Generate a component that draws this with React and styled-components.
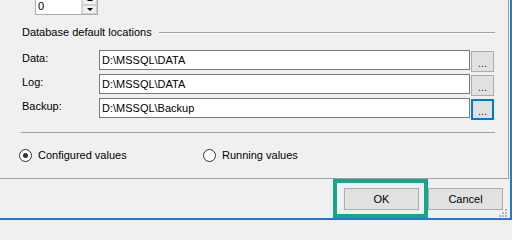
import styled, { createGlobalStyle } from 'styled-components'

const GlobalStyle = createGlobalStyle`
  body {
    margin: 0;
    background: #f0f0f0;
    font-family: "Liberation Sans", Arial, sans-serif;
    font-size: 11px;
    color: #000;
  }
`;

const Window = styled.div`
  position: relative;
  width: 510px;
  height: 218px;
  background: #f0f0f0;
  border-right: 2px solid #1e7bd0;
  border-bottom: 2px solid #1e7bd0;
  overflow: hidden;
`;

const Panel = styled.div`
  box-sizing: border-box;
  width: 509px;
  height: 179px;
  border-right: 1px solid #a0a0a0;
  border-bottom: 1px solid #a0a0a0;
  display: flex;
  flex-direction: column;
`;

const Spin = styled.div`
  box-sizing: border-box;
  margin: -6px 0 0 35px;
  width: 63px;
  height: 21px;
  border: 1px solid #adadad;
  background: #fff;
  display: flex;
`;

const SpinValue = styled.div`
  flex: 1;
  padding: 5px 0 0 2px;
  line-height: 13px;
`;

const SpinButtons = styled.div`
  width: 15px;
  display: flex;
  flex-direction: column;
  border-left: 1px solid #dcdcdc;
`;

const SpinBtn = styled.div`
  flex: 1;
  background: #f0f0f0;
  border: 1px solid #cfcfcf;
  display: flex;
  align-items: center;
  justify-content: center;
  &::after {
    content: '';
    border-left: 3px solid transparent;
    border-right: 3px solid transparent;
    ${(p) => (p.up ? 'border-bottom: 3px solid #000;' : 'border-top: 3px solid #000;')}
  }
`;

const GroupHeader = styled.div`
  display: flex;
  align-items: center;
  margin: 11px 13px 0 22px;
  height: 13px;
  line-height: 13px;
`;

const GroupLine = styled.div`
  flex: 1;
  margin-left: 7px;
  border-top: 1px solid #a0a0a0;
  border-bottom: 1px solid #fff;
`;

const Rows = styled.div`
  display: flex;
  flex-direction: column;
  gap: 2px;
  margin: 11px 0 0 22px;
`;

const Row = styled.div`
  display: flex;
  align-items: flex-start;
`;

const Label = styled.div`
  width: 77px;
  padding-top: 2px;
  line-height: 13px;
`;

const PathInput = styled.div`
  box-sizing: border-box;
  width: 371px;
  height: 20px;
  border: 1px solid #7a7a7a;
  background: #fff;
  padding: 3px 0 0 2px;
  line-height: 13px;
`;

const BrowseButton = styled.div`
  box-sizing: border-box;
  width: 23px;
  height: 21px;
  margin: 1px 0 0 1px;
  background: #e1e1e1;
  border: ${(p) => (p.focused ? '2px solid #0078d7' : '1px solid #adadad')};
  display: flex;
  align-items: center;
  justify-content: center;
  padding-top: 3px;
  color: #4a0a4a;
  line-height: 13px;
`;

const Separator = styled.div`
  margin: 12px 0 0 21px;
  width: 474px;
  border-top: 1px solid #a0a0a0;
`;

const RadioRow = styled.div`
  display: flex;
  margin: 16px 0 0 19px;
`;

const Option = styled.div`
  display: flex;
  align-items: center;
  gap: 6px;
  width: ${(p) => p.width}px;
  line-height: 13px;
`;

const Radio = styled.span`
  box-sizing: border-box;
  width: 13px;
  height: 13px;
  border-radius: 50%;
  border: 1px solid #333;
  background: #fff;
  display: flex;
  align-items: center;
  justify-content: center;
  &::after {
    content: '';
    width: 5px;
    height: 5px;
    border-radius: 50%;
    background: ${(p) => (p.checked ? '#333' : 'transparent')};
  }
`;

const Footer = styled.div`
  height: 39px;
  display: flex;
  justify-content: flex-end;
  align-items: flex-start;
  padding-right: 7px;
`;

const Highlight = styled.div`
  border: 4px solid #17a68a;
  padding: 5px 5px 4px 7px;
`;

const DialogButton = styled.div`
  box-sizing: border-box;
  width: 75px;
  height: 22px;
  margin-top: ${(p) => p.offset || 0}px;
  background: #e1e1e1;
  border: 1px solid #adadad;
  display: flex;
  align-items: center;
  justify-content: center;
  line-height: 13px;
`;

const Grip = styled.svg`
  position: absolute;
  right: 3px;
  bottom: 1px;
`;

const paths = [
  { label: 'Data:', value: 'D:\\MSSQL\\DATA' },
  { label: 'Log:', value: 'D:\\MSSQL\\DATA' },
  { label: 'Backup:', value: 'D:\\MSSQL\\Backup', focused: true },
];

export default function App() {
  return (
    <Window>
      <GlobalStyle />
      <Panel>
        <Spin>
          <SpinValue>0</SpinValue>
          <SpinButtons>
            <SpinBtn up />
            <SpinBtn />
          </SpinButtons>
        </Spin>
        <GroupHeader>
          Database default locations
          <GroupLine />
        </GroupHeader>
        <Rows>
          {paths.map((p) => (
            <Row key={p.label}>
              <Label>{p.label}</Label>
              <PathInput>{p.value}</PathInput>
              <BrowseButton focused={p.focused}>...</BrowseButton>
            </Row>
          ))}
        </Rows>
        <Separator />
        <RadioRow>
          <Option width={184}>
            <Radio checked />
            Configured values
          </Option>
          <Option width={150}>
            <Radio />
            Running values
          </Option>
        </RadioRow>
      </Panel>
      <Footer>
        <Highlight>
          <DialogButton>OK</DialogButton>
        </Highlight>
        <DialogButton offset={9}>Cancel</DialogButton>
      </Footer>
      <Grip width="8" height="8" viewBox="0 0 8 8">
        <rect x="6" y="0" width="2" height="2" fill="#b8b8b8" />
        <rect x="3" y="3" width="2" height="2" fill="#b8b8b8" />
        <rect x="6" y="3" width="2" height="2" fill="#b8b8b8" />
        <rect x="0" y="6" width="2" height="2" fill="#b8b8b8" />
        <rect x="3" y="6" width="2" height="2" fill="#b8b8b8" />
        <rect x="6" y="6" width="2" height="2" fill="#b8b8b8" />
      </Grip>
    </Window>
  );
}
